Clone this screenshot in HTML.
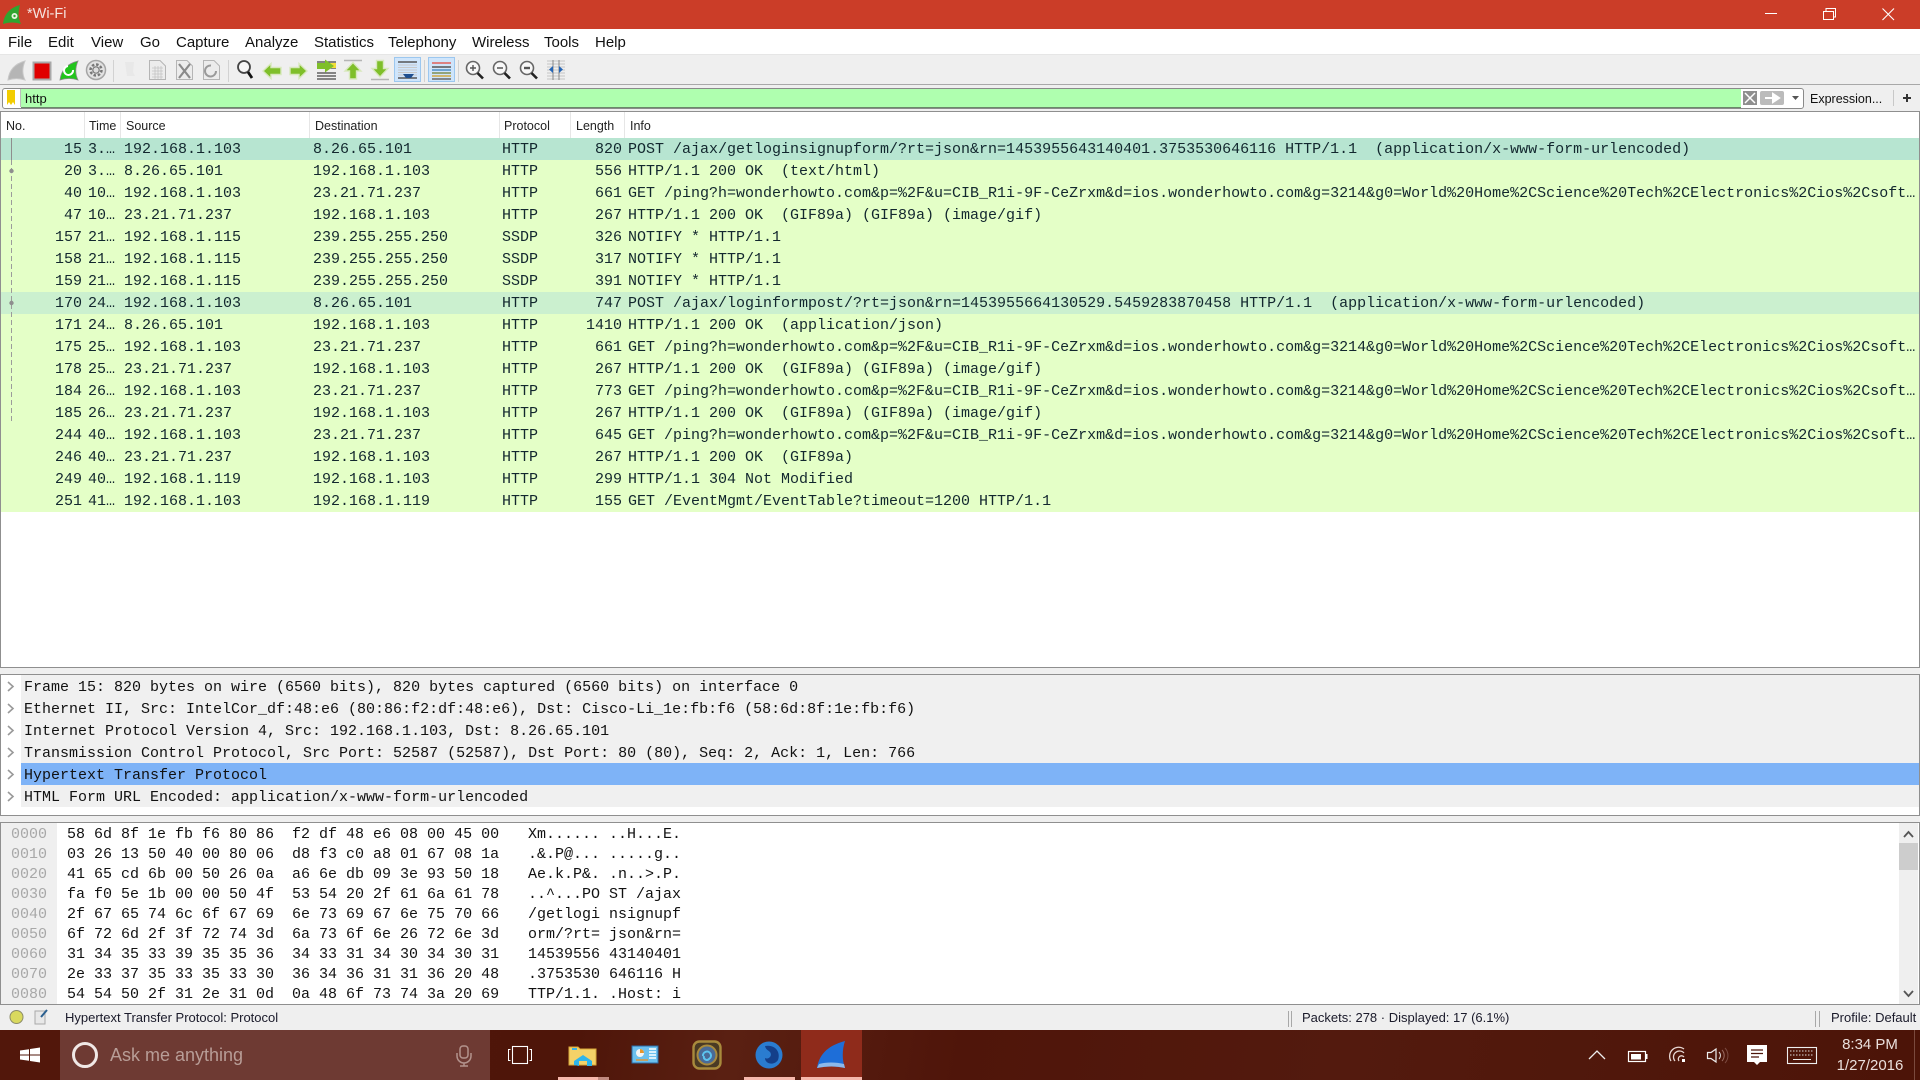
<!DOCTYPE html>
<html><head><meta charset="utf-8"><title>*Wi-Fi</title>
<style>
html,body{margin:0;padding:0;width:1920px;height:1080px;overflow:hidden;background:#efefef}
body{position:relative;font-family:"Liberation Sans",sans-serif;color:#000}
div,span{position:absolute;white-space:pre}
.m{top:34px;font-size:15px;line-height:18px;color:#111}
.h{top:118px;font-size:12.5px;line-height:16px;color:#222}
.sep{top:112px;width:1px;height:26px;background:#e6e6e6}
.r{left:1px;width:1918px;height:22px;background:#e4ffc7;font-family:"Liberation Mono",monospace;font-size:15px;line-height:22px;color:#12272e;overflow:hidden}
.r span{top:1px}
.n{right:1837px;text-align:right}.t{left:87px}.s{left:123px}.d{left:312px}.p{left:501px}.l{right:1297px;text-align:right}.i{left:627px;width:1288px;overflow:hidden}
.tr{left:24px;font-family:"Liberation Mono",monospace;font-size:15px;line-height:22px;color:#111}
.hx{font-family:"Liberation Mono",monospace;font-size:15px;line-height:20px;color:#111}
.o{left:11px;color:#a8a8a8}.b{left:67px}.a{left:528px}
.st{top:1010px;font-size:13px;line-height:16px;color:#1a1a2a}
</style></head><body>
<div style="left:0;top:0;width:1920px;height:29px;background:#cb3d28"></div>
<div style="left:27px;top:5px;font-size:14.5px;line-height:18px;color:#f6e4e0">*Wi-Fi</div>
<div style="left:0;top:29px;width:1920px;height:25px;background:#fff"></div>
<div style="left:0;top:54px;width:1920px;height:1px;background:#e6e6e6"></div>
<span class="m" style="left:8px">File</span><span class="m" style="left:48px">Edit</span><span class="m" style="left:91px">View</span><span class="m" style="left:140px">Go</span><span class="m" style="left:176px">Capture</span><span class="m" style="left:245px">Analyze</span><span class="m" style="left:314px">Statistics</span><span class="m" style="left:388px">Telephony</span><span class="m" style="left:472px">Wireless</span><span class="m" style="left:544px">Tools</span><span class="m" style="left:595px">Help</span>
<div style="left:0;top:84px;width:1920px;height:1px;background:#a8a8a8"></div>

<!-- filter -->
<div style="left:2px;top:88px;width:1800px;height:19px;border:1px solid #8a8a8a;border-radius:3px;background:#fff"></div>
<div style="left:21px;top:89px;width:1720px;height:19px;background:#afffaf;border-bottom:1px solid #6a8a6a;box-sizing:border-box"></div>
<div style="left:25px;top:91px;font-size:13px;line-height:16px;color:#111">http</div>
<div style="left:1810px;top:91px;font-size:12.5px;line-height:16px;color:#111">Expression...</div>

<!-- packet list -->
<div style="left:0;top:111px;width:1918px;height:555px;border:1px solid #8f8f8f;background:#fff"></div>
<div class="sep" style="left:84px"></div><div class="sep" style="left:120px"></div><div class="sep" style="left:309px"></div><div class="sep" style="left:499px"></div><div class="sep" style="left:570px"></div><div class="sep" style="left:624px"></div>
<span class="h" style="left:6px">No.</span><span class="h" style="left:89px;width:27px;overflow:hidden">Time</span><span class="h" style="left:126px">Source</span><span class="h" style="left:315px">Destination</span><span class="h" style="left:504px">Protocol</span><span class="h" style="left:576px">Length</span><span class="h" style="left:630px">Info</span>

<div class="r" style="top:138px;background:#b7e5d1"><span class="n">15</span><span class="t">3.…</span><span class="s">192.168.1.103</span><span class="d">8.26.65.101</span><span class="p">HTTP</span><span class="l">820</span><span class="i">POST /ajax/getloginsignupform/?rt=json&amp;rn=1453955643140401.3753530646116 HTTP/1.1  (application/x-www-form-urlencoded)</span></div>
<div class="r" style="top:160px"><span class="n">20</span><span class="t">3.…</span><span class="s">8.26.65.101</span><span class="d">192.168.1.103</span><span class="p">HTTP</span><span class="l">556</span><span class="i">HTTP/1.1 200 OK  (text/html)</span></div>
<div class="r" style="top:182px"><span class="n">40</span><span class="t">10…</span><span class="s">192.168.1.103</span><span class="d">23.21.71.237</span><span class="p">HTTP</span><span class="l">661</span><span class="i">GET /ping?h=wonderhowto.com&amp;p=%2F&amp;u=CIB_R1i-9F-CeZrxm&amp;d=ios.wonderhowto.com&amp;g=3214&amp;g0=World%20Home%2CScience%20Tech%2CElectronics%2Cios%2Csoft…</span></div>
<div class="r" style="top:204px"><span class="n">47</span><span class="t">10…</span><span class="s">23.21.71.237</span><span class="d">192.168.1.103</span><span class="p">HTTP</span><span class="l">267</span><span class="i">HTTP/1.1 200 OK  (GIF89a) (GIF89a) (image/gif)</span></div>
<div class="r" style="top:226px"><span class="n">157</span><span class="t">21…</span><span class="s">192.168.1.115</span><span class="d">239.255.255.250</span><span class="p">SSDP</span><span class="l">326</span><span class="i">NOTIFY * HTTP/1.1</span></div>
<div class="r" style="top:248px"><span class="n">158</span><span class="t">21…</span><span class="s">192.168.1.115</span><span class="d">239.255.255.250</span><span class="p">SSDP</span><span class="l">317</span><span class="i">NOTIFY * HTTP/1.1</span></div>
<div class="r" style="top:270px"><span class="n">159</span><span class="t">21…</span><span class="s">192.168.1.115</span><span class="d">239.255.255.250</span><span class="p">SSDP</span><span class="l">391</span><span class="i">NOTIFY * HTTP/1.1</span></div>
<div class="r" style="top:292px;background:#cbf0cf"><span class="n">170</span><span class="t">24…</span><span class="s">192.168.1.103</span><span class="d">8.26.65.101</span><span class="p">HTTP</span><span class="l">747</span><span class="i">POST /ajax/loginformpost/?rt=json&amp;rn=1453955664130529.5459283870458 HTTP/1.1  (application/x-www-form-urlencoded)</span></div>
<div class="r" style="top:314px"><span class="n">171</span><span class="t">24…</span><span class="s">8.26.65.101</span><span class="d">192.168.1.103</span><span class="p">HTTP</span><span class="l">1410</span><span class="i">HTTP/1.1 200 OK  (application/json)</span></div>
<div class="r" style="top:336px"><span class="n">175</span><span class="t">25…</span><span class="s">192.168.1.103</span><span class="d">23.21.71.237</span><span class="p">HTTP</span><span class="l">661</span><span class="i">GET /ping?h=wonderhowto.com&amp;p=%2F&amp;u=CIB_R1i-9F-CeZrxm&amp;d=ios.wonderhowto.com&amp;g=3214&amp;g0=World%20Home%2CScience%20Tech%2CElectronics%2Cios%2Csoft…</span></div>
<div class="r" style="top:358px"><span class="n">178</span><span class="t">25…</span><span class="s">23.21.71.237</span><span class="d">192.168.1.103</span><span class="p">HTTP</span><span class="l">267</span><span class="i">HTTP/1.1 200 OK  (GIF89a) (GIF89a) (image/gif)</span></div>
<div class="r" style="top:380px"><span class="n">184</span><span class="t">26…</span><span class="s">192.168.1.103</span><span class="d">23.21.71.237</span><span class="p">HTTP</span><span class="l">773</span><span class="i">GET /ping?h=wonderhowto.com&amp;p=%2F&amp;u=CIB_R1i-9F-CeZrxm&amp;d=ios.wonderhowto.com&amp;g=3214&amp;g0=World%20Home%2CScience%20Tech%2CElectronics%2Cios%2Csoft…</span></div>
<div class="r" style="top:402px"><span class="n">185</span><span class="t">26…</span><span class="s">23.21.71.237</span><span class="d">192.168.1.103</span><span class="p">HTTP</span><span class="l">267</span><span class="i">HTTP/1.1 200 OK  (GIF89a) (GIF89a) (image/gif)</span></div>
<div class="r" style="top:424px"><span class="n">244</span><span class="t">40…</span><span class="s">192.168.1.103</span><span class="d">23.21.71.237</span><span class="p">HTTP</span><span class="l">645</span><span class="i">GET /ping?h=wonderhowto.com&amp;p=%2F&amp;u=CIB_R1i-9F-CeZrxm&amp;d=ios.wonderhowto.com&amp;g=3214&amp;g0=World%20Home%2CScience%20Tech%2CElectronics%2Cios%2Csoft…</span></div>
<div class="r" style="top:446px"><span class="n">246</span><span class="t">40…</span><span class="s">23.21.71.237</span><span class="d">192.168.1.103</span><span class="p">HTTP</span><span class="l">267</span><span class="i">HTTP/1.1 200 OK  (GIF89a)</span></div>
<div class="r" style="top:468px"><span class="n">249</span><span class="t">40…</span><span class="s">192.168.1.119</span><span class="d">192.168.1.103</span><span class="p">HTTP</span><span class="l">299</span><span class="i">HTTP/1.1 304 Not Modified</span></div>
<div class="r" style="top:490px"><span class="n">251</span><span class="t">41…</span><span class="s">192.168.1.103</span><span class="d">192.168.1.119</span><span class="p">HTTP</span><span class="l">155</span><span class="i">GET /EventMgmt/EventTable?timeout=1200 HTTP/1.1</span></div>

<!-- tree -->
<div style="left:0;top:674px;width:1918px;height:140px;border:1px solid #8f8f8f;background:#fff"></div>
<div style="left:1px;top:675px;width:1918px;height:132px;background:#f0f0f0"></div>
<div style="left:1px;top:675px;width:20px;height:132px;background:#fff"></div>
<div style="left:21px;top:763px;width:1898px;height:22px;background:#7eb3f7"></div>
<span class="tr" style="top:677px">Frame 15: 820 bytes on wire (6560 bits), 820 bytes captured (6560 bits) on interface 0</span>
<span class="tr" style="top:699px">Ethernet II, Src: IntelCor_df:48:e6 (80:86:f2:df:48:e6), Dst: Cisco-Li_1e:fb:f6 (58:6d:8f:1e:fb:f6)</span>
<span class="tr" style="top:721px">Internet Protocol Version 4, Src: 192.168.1.103, Dst: 8.26.65.101</span>
<span class="tr" style="top:743px">Transmission Control Protocol, Src Port: 52587 (52587), Dst Port: 80 (80), Seq: 2, Ack: 1, Len: 766</span>
<span class="tr" style="top:765px">Hypertext Transfer Protocol</span>
<span class="tr" style="top:787px">HTML Form URL Encoded: application/x-www-form-urlencoded</span>

<!-- hex -->
<div style="left:0;top:822px;width:1918px;height:181px;border:1px solid #8f8f8f;background:#fff"></div>
<div style="left:1px;top:823px;width:56px;height:181px;background:#efefef"></div>
<div style="left:1899px;top:823px;width:19px;height:181px;background:#efefef"></div>
<div style="left:1899px;top:843px;width:19px;height:27px;background:#cdcdcd"></div>
<span class="hx o" style="top:825px">0000</span><span class="hx b" style="top:825px">58 6d 8f 1e fb f6 80 86  f2 df 48 e6 08 00 45 00</span><span class="hx a" style="top:825px">Xm...... ..H...E.</span>
<span class="hx o" style="top:845px">0010</span><span class="hx b" style="top:845px">03 26 13 50 40 00 80 06  d8 f3 c0 a8 01 67 08 1a</span><span class="hx a" style="top:845px">.&amp;.P@... .....g..</span>
<span class="hx o" style="top:865px">0020</span><span class="hx b" style="top:865px">41 65 cd 6b 00 50 26 0a  a6 6e db 09 3e 93 50 18</span><span class="hx a" style="top:865px">Ae.k.P&amp;. .n..&gt;.P.</span>
<span class="hx o" style="top:885px">0030</span><span class="hx b" style="top:885px">fa f0 5e 1b 00 00 50 4f  53 54 20 2f 61 6a 61 78</span><span class="hx a" style="top:885px">..^...PO ST /ajax</span>
<span class="hx o" style="top:905px">0040</span><span class="hx b" style="top:905px">2f 67 65 74 6c 6f 67 69  6e 73 69 67 6e 75 70 66</span><span class="hx a" style="top:905px">/getlogi nsignupf</span>
<span class="hx o" style="top:925px">0050</span><span class="hx b" style="top:925px">6f 72 6d 2f 3f 72 74 3d  6a 73 6f 6e 26 72 6e 3d</span><span class="hx a" style="top:925px">orm/?rt= json&amp;rn=</span>
<span class="hx o" style="top:945px">0060</span><span class="hx b" style="top:945px">31 34 35 33 39 35 35 36  34 33 31 34 30 34 30 31</span><span class="hx a" style="top:945px">14539556 43140401</span>
<span class="hx o" style="top:965px">0070</span><span class="hx b" style="top:965px">2e 33 37 35 33 35 33 30  36 34 36 31 31 36 20 48</span><span class="hx a" style="top:965px">.3753530 646116 H</span>
<span class="hx o" style="top:985px">0080</span><span class="hx b" style="top:985px">54 54 50 2f 31 2e 31 0d  0a 48 6f 73 74 3a 20 69</span><span class="hx a" style="top:985px">TTP/1.1. .Host: i</span>

<!-- status -->
<span class="st" style="left:65px">Hypertext Transfer Protocol: Protocol</span>
<span class="st" style="left:1302px">Packets: 278 · Displayed: 17 (6.1%)</span>
<span class="st" style="left:1831px">Profile: Default</span>

<!-- taskbar -->
<div style="left:0;top:1030px;width:1920px;height:50px;background:linear-gradient(100deg,#52170b 0%,#4e1509 30%,#5a2012 38%,#4f150a 50%,#531a0e 70%,#4c1408 100%)"></div>
<div style="left:60px;top:1030px;width:430px;height:50px;background:#6e3a33"></div>
<div style="left:801px;top:1030px;width:61px;height:50px;background:#8f2b1b"></div>
<span style="left:110px;top:1044px;font-size:18px;line-height:22px;color:#b89d97">Ask me anything</span>
<span style="left:1830px;top:1036px;width:80px;text-align:center;font-size:15px;line-height:18px;color:#eadfdc">8:34 PM</span>
<span style="left:1830px;top:1057px;width:80px;text-align:center;font-size:15px;line-height:18px;color:#eadfdc">1/27/2016</span>

<svg width="1920" height="1080" viewBox="0 0 1920 1080" style="position:absolute;left:0;top:0" fill="none">
<!-- title logo -->
<path d="M3 24C4 15 9 8 20 5C18 12 18 18 21 24C15 22 9 22 3 24Z" fill="#2fa52f"/>
<circle cx="14.500" cy="16" r="3" fill="#e8f5e0"/><circle cx="14.500" cy="16" r="1.200" fill="#2fa52f"/>
<!-- window buttons -->
<path d="M1765 13.500H1777" stroke="#fff"/>
<path d="M1823.500 11.500H1833.500V19.500H1823.500ZM1826 11V8.500H1835.500V17H1834" stroke="#fff"/>
<path d="M1882.500 8.500L1894 20M1894 8.500L1882.500 20" stroke="#fff" stroke-width="1.100"/>

<!-- toolbar -->
<path d="M8 80C9 71 14 64 25 61C22 68 22 74 25 80C19 78 14 78 8 80Z" fill="#b5b5b5" stroke="#c8c8c8"/>
<rect x="33.500" y="62.500" width="17" height="17" fill="#e00000" stroke="#a9a9a9" stroke-width="2"/>
<path d="M60 80C61 71 66 64 78 61C75 68 75 74 78 80C72 78 66 78 60 80Z" fill="#22c51c" stroke="#8a8a8a" stroke-width=".8"/>
<path d="M73 70A4.500 4.500 0 1 1 68 66" stroke="#fff" stroke-width="2"/>
<circle cx="96" cy="70" r="9.500" fill="#e2e2e2" stroke="#a5a5a5" stroke-width="1.500"/>
<circle cx="96" cy="70" r="5.500" fill="none" stroke="#777" stroke-width="2.500" stroke-dasharray="2.500 1.800"/>
<circle cx="96" cy="70" r="3.200" fill="#ddd" stroke="#777" stroke-width="1.200"/>
<path d="M113.500 60V82M228.500 60V82M424.500 60V82M458.500 60V82" stroke="#d2d2d2"/>
<path d="M125 62H134L133 72L135 76H127Z" fill="#e8e8e8"/>
<g stroke="#b5b5b5" fill="#ececec"><path d="M149.500 60.500H160L165.500 66V79.500H149.500Z"/><path d="M176.500 60.500H187L192.500 66V79.500H176.500Z"/><path d="M203.500 60.500H214L219.500 66V79.500H203.500Z"/></g>
<path d="M152 68H163M152 71H163M152 74H163M152 77H163M155 66V79M158 66V79M161 66V79" stroke="#c4c4c4" stroke-width=".8"/>
<path d="M179 64L190 78M190 64L179 78" stroke="#8a8a8a" stroke-width="2.200"/>
<path d="M216 71A5.500 5.500 0 1 1 211 65.500" stroke="#9a9a9a" stroke-width="2"/>
<circle cx="244" cy="67" r="6" fill="#f6f6f6" stroke="#444" stroke-width="1.800"/>
<path d="M248 72L252 78" stroke="#111" stroke-width="2.800"/>
<!-- arrows -->
<path d="M263 71L271 63.500V67.500H281V74.500H271V78.500Z" fill="#7fbf2a" stroke="#d8e8bd" stroke-width="1.400"/>
<path d="M307 71L299 63.500V67.500H290V74.500H299V78.500Z" fill="#7fbf2a" stroke="#d8e8bd" stroke-width="1.400"/>
<path d="M317 68H336M317 73H336M317 76H336M317 79H336" stroke="#444" stroke-width="1.200"/>
<path d="M317 62H336" stroke="#444" stroke-width="1.200"/>
<path d="M329 63H336V68H329Z" fill="#f2de3a"/>
<path d="M334 66L325 59.500V63H317V69H325V72.500Z" fill="#7fbf2a"/>
<path d="M344 60.500H362" stroke="#b5b5b5" stroke-width="1.600"/>
<path d="M353 62.500L345 71H349.500V79H356.500V71H361Z" fill="#7fbf2a" stroke="#d8e8bd" stroke-width="1.400"/>
<path d="M371 79.500H389" stroke="#b5b5b5" stroke-width="1.600"/>
<path d="M380 77L372 68.500H376.500V60.500H383.500V68.500H388Z" fill="#7fbf2a" stroke="#d8e8bd" stroke-width="1.400"/>
<rect x="394.500" y="57.500" width="26" height="24" fill="#cfe5fb" stroke="#9cc7ef"/>
<rect x="428.500" y="57.500" width="26" height="24" fill="#cfe5fb" stroke="#9cc7ef"/>
<path d="M398 62H417" stroke="#555" stroke-width="1.400"/><path d="M398 65H417M398 67.500H417M398 70H417M398 72.500H417M398 75H417" stroke="#c8c8c8"/>
<path d="M398 78H417" stroke="#555" stroke-width="1.400"/><path d="M403 74H414L411 78H406Z" fill="#1f4f8f"/>
<g stroke-width="1.500"><path d="M432 63H451" stroke="#e0605a"/><path d="M432 67H451" stroke="#555"/><path d="M432 70H451" stroke="#4f8fc5"/><path d="M432 73H451" stroke="#7f8f4f"/><path d="M432 76H451" stroke="#d0a840"/><path d="M432 79H451" stroke="#666"/></g>
<g stroke="#666" stroke-width="1.600" fill="#f8f8f8"><circle cx="473" cy="68" r="6.500"/><circle cx="500" cy="68" r="6.500"/><circle cx="527" cy="68" r="6.500"/></g>
<path d="M477.500 73L483 78.500M504.500 73L510 78.500M531.500 73L537 78.500" stroke="#222" stroke-width="2.600"/>
<path d="M470 68H476M473 65V71M497 68H503" stroke="#555" stroke-width="1.400"/><path d="M524 68H530" stroke="#555" stroke-width="2.400"/>
<path d="M547 61H565M547 64H565M547 67H565M547 70H565M547 73H565M547 76H565M547 79H565" stroke="#c4c4c4"/>
<path d="M553 60V80M559 60V80" stroke="#888"/>
<path d="M553 66L549 69.500L553 73ZM559 66L563 69.500L559 73Z" fill="#2766b5"/>

<!-- filter -->
<rect x="7" y="90" width="8" height="15" fill="#f2cc00"/><path d="M7 105L9 102L11 105L13 102L15 105Z" fill="#fff"/>
<path d="M20.500 89V107" stroke="#bdbdbd"/>
<rect x="1743" y="91" width="14" height="14" fill="#8f8f8f"/><path d="M1745 93L1755 103M1755 93L1745 103" stroke="#fff" stroke-width="1.500"/>
<rect x="1760" y="91" width="24" height="14" rx="2" fill="#bbb"/><path d="M1765 98H1775M1773 94L1779 98L1773 102Z" stroke="#fff" fill="#fff" stroke-width="2"/>
<path d="M1792 96H1799L1795.500 100Z" fill="#555"/>
<path d="M1893.500 90V106" stroke="#c8c8c8"/>
<path d="M1903 98H1911M1907 94V102" stroke="#333" stroke-width="2"/>

<!-- packet list relations -->
<path d="M11.500 138V160" stroke="#8e8e8e"/>
<path d="M11.500 160V423" stroke="#9b9b9b" stroke-dasharray="5 3"/>
<circle cx="11.500" cy="171" r="2.200" fill="#8e8e8e"/><circle cx="11.500" cy="303" r="2.200" fill="#8e8e8e"/>

<!-- tree arrows -->
<g stroke="#999" stroke-width="1.600"><path d="M8 682L13 686.500L8 691"/><path d="M8 704L13 708.500L8 713"/><path d="M8 726L13 730.500L8 735"/><path d="M8 748L13 752.500L8 757"/><path d="M8 770L13 774.500L8 779"/><path d="M8 792L13 796.500L8 801"/></g>

<!-- scroll arrows -->
<path d="M1904 837L1908.500 832L1913 837M1904 991L1908.500 996L1913 991" stroke="#555" stroke-width="1.800"/>

<!-- status -->
<circle cx="16.500" cy="1017" r="6.500" fill="#d9d95e" stroke="#8c8c6a"/>
<rect x="35" y="1011" width="10" height="13" fill="#e8e8e8" stroke="#a9a9a9"/>
<path d="M41 1017L47 1010" stroke="#2a5f8f" stroke-width="2"/>
<path d="M1288.500 1011V1027M1291.500 1011V1027M1815.500 1011V1027M1819.500 1011V1027" stroke="#a8a8a8"/>

<!-- taskbar: start -->
<path d="M20 1050.500L29 1049.200V1054.500H20ZM30 1049L40 1047.500V1054.500H30ZM20 1055.500H29V1060.800L20 1059.500ZM30 1055.500H40V1062.500L30 1061Z" fill="#fff"/>
<circle cx="85" cy="1055" r="11.500" stroke="#f0e8e6" stroke-width="3"/>
<rect x="460" y="1046" width="8" height="12" rx="3" stroke="#b3938d" stroke-width="1.500"/>
<path d="M457 1053V1056A7 7 0 0 0 471 1056V1053M464 1063V1066M460 1066H468" stroke="#b3938d" stroke-width="1.500"/>
<!-- task view -->
<rect x="512.500" y="1046.500" width="15" height="17" stroke="#fff" stroke-width="1.100"/>
<path d="M510.500 1049.500H508.500V1060.500H510.500M529.500 1049.500H531.500V1060.500H529.500" stroke="#fff"/>
<!-- explorer -->
<path d="M569 1047H578L580 1049H596V1065H569Z" fill="#f4d268" stroke="#d8a83a"/>
<path d="M572 1048H577V1050H572Z" fill="#3bb4e8"/>
<path d="M574 1065V1061L583 1055L592 1061V1066H587V1061H579V1066Z" fill="#2fb5ea"/>
<!-- control panel -->
<rect x="632" y="1046" width="26" height="17" fill="#6cc0ee" stroke="#2a6da8"/>
<circle cx="640" cy="1053" r="4" fill="#f4f4f4"/><path d="M640 1053V1049A4 4 0 0 1 644 1053Z" fill="#e8962c"/>
<path d="M649 1049H656M649 1052H656M649 1055H656M649 1058H656" stroke="#fff" stroke-width="1.500"/>
<path d="M636 1060H648" stroke="#e8962c" stroke-width="1.400"/>
<!-- hearthstone -->
<rect x="693.500" y="1041.500" width="27" height="27" rx="6" fill="#4a3a24" stroke="#a88a3c" stroke-width="2.400"/>
<circle cx="707" cy="1055" r="9.500" fill="#4a6a96" stroke="#a88a3c" stroke-width="2"/>
<path d="M703 1056A4 4 0 1 1 709 1059A3 3 0 0 1 704 1056" stroke="#5cc4f0" stroke-width="2"/>
<!-- firefox -->
<circle cx="769" cy="1055" r="13.500" fill="#2a7cd0"/>
<path d="M765 1046C775 1044 781 1052 778 1060C774 1066 765 1064 765 1058C768 1060 773 1056 770 1052C768 1050 766 1050 765 1046Z" fill="#143f8a"/>
<!-- wireshark -->
<path d="M817 1068C819 1056 826 1046 845 1041C842 1050 842 1060 845 1068C836 1066 827 1066 817 1068Z" fill="#1e6ed8"/>
<path d="M817 1068C827 1066 836 1066 845 1068L844 1064C836 1062 826 1062 819 1064Z" fill="#8db8ea"/>
<!-- underlines -->
<rect x="558" y="1077" width="40" height="3" fill="#f6b8ac"/><rect x="598" y="1077" width="11" height="3" fill="#c08a80"/>
<rect x="744" y="1077" width="51" height="3" fill="#f6b8ac"/><rect x="801" y="1077" width="61" height="3" fill="#f6b8ac"/>
<!-- tray -->
<path d="M1589 1059L1597 1051L1605 1059" stroke="#eee" stroke-width="1.300"/>
<rect x="1628.500" y="1051.500" width="17" height="10" stroke="#fff" stroke-width="1.200"/><rect x="1631" y="1054" width="10" height="5.500" fill="#fff"/><rect x="1646" y="1054" width="1.500" height="5" fill="#fff"/>
<path d="M1671 1061A9 9 0 0 1 1684 1049M1675 1061A6 6 0 0 1 1684 1053M1679 1061A3 3 0 0 1 1684 1057" stroke="#e8d8d4" stroke-width="1.300"/>
<rect x="1682" y="1059" width="3" height="3" fill="#fff"/>
<path d="M1707.500 1052.500H1711L1716 1049V1062L1711 1058.500H1707.500Z" stroke="#eee" stroke-width="1.200"/>
<path d="M1719 1052A5 5 0 0 1 1719 1059" stroke="#ddd"/><path d="M1722 1050A8 8 0 0 1 1722 1061" stroke="#9a6a60"/><path d="M1725 1048A11 11 0 0 1 1725 1063" stroke="#7a4a40"/>
<path d="M1747 1045H1767V1062H1760L1757 1065L1754 1062H1747Z" fill="#fff"/>
<path d="M1751 1050H1763M1751 1053.500H1763M1751 1057H1759" stroke="#4e1509" stroke-width="1.200"/>
<rect x="1787.500" y="1047.500" width="29" height="16" stroke="#eee" stroke-width="1.100"/>
<path d="M1790 1051H1814M1790 1055H1814" stroke="#ddd" stroke-dasharray="1.500 1.500"/><path d="M1793 1059.500H1811" stroke="#eee"/>
<rect x="1914" y="1030" width="1" height="50" fill="#7a4a3e"/>
</svg>
</body></html>
